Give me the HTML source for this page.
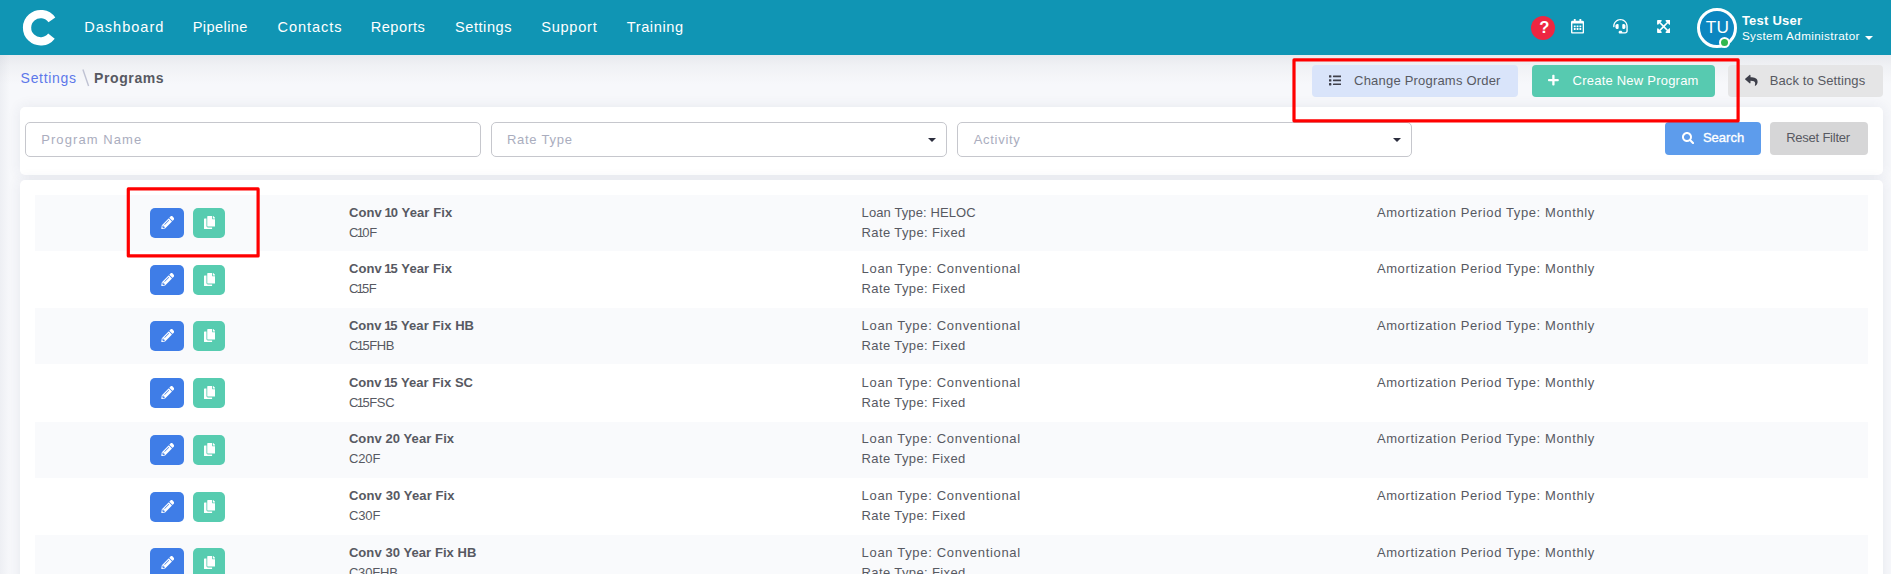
<!DOCTYPE html>
<html><head><meta charset="utf-8">
<style>
*{box-sizing:border-box;margin:0;padding:0}
html,body{width:1891px;height:574px;overflow:hidden}
body{font-family:"Liberation Sans",sans-serif;background:#f7f8fb;position:relative}
.abs{position:absolute}
.t{position:absolute;white-space:nowrap;line-height:20px}
.card{position:absolute;background:#fff;border-radius:5px;box-shadow:0 0 14px rgba(50,60,90,.085)}
.inp{position:absolute;top:122px;height:35px;border:1px solid #c6c7cd;border-radius:5px;background:#fff}
.caret{position:absolute;width:0;height:0;border-left:4px solid transparent;border-right:4px solid transparent;border-top:4.5px solid #2c2e3e}
.btn{position:absolute;border-radius:4px}
.red{position:absolute;border:3px solid #fb0007;border-radius:2px}
</style></head><body>
<div class="abs" style="left:0;top:55px;width:1891px;height:30px;background:linear-gradient(to bottom,rgba(40,50,70,.075) 0%,rgba(40,50,70,.035) 35%,rgba(40,50,70,.01) 75%,rgba(40,50,70,0) 100%)"></div>
<div class="abs" style="left:0;top:55px;width:10px;height:519px;background:linear-gradient(to right,rgba(110,120,145,.07),rgba(110,120,145,0))"></div>
<div class="abs" style="left:0;top:0;width:1891px;height:55px;background:#1095b4"></div>
<svg class="abs" style="left:0;top:0" width="80" height="55" viewBox="0 0 80 55"><path d="M51.88 19.87 A13.65 13.65 0 1 0 51.46 36.10" fill="none" stroke="#fff" stroke-width="8.3"/></svg>
<div class="abs" style="left:1531px;top:16px;width:24px;height:24px;border-radius:50%;background:#ee2641"></div>
<div class="abs" style="left:1697px;top:8px;width:40px;height:40px;border-radius:50%;background:#0b86c0;border:3px solid #fff"></div>
<div class="abs" style="left:1719.3px;top:37.1px;width:11px;height:11px;border-radius:50%;background:#2fb84e;border:2px solid #fff"></div>
<div class="caret" style="left:1865px;top:35.5px;border-top-color:#fff;border-top-width:4px"></div>

<svg class="abs" style="left:80px;top:66px" width="12" height="24" viewBox="0 0 12 24"><path d="M2.9 3.6 L8.6 20" stroke="#bfc2d3" stroke-width="1.4" fill="none"/></svg>

<div class="btn" style="left:1312px;top:65px;width:206px;height:32px;background:#d9e4fa"></div>
<div class="btn" style="left:1532px;top:65px;width:183px;height:32px;background:#57cab0"></div>
<div class="btn" style="left:1728px;top:65px;width:155px;height:32px;background:#e5e5e6"></div>

<div class="card" style="left:20px;top:107px;width:1863px;height:68px"></div>
<div class="inp" style="left:25px;width:456px"></div>
<div class="inp" style="left:491px;width:456px"></div>
<div class="inp" style="left:957px;width:455px"></div>
<div class="caret" style="left:927.8px;top:138px"></div>
<div class="caret" style="left:1393.2px;top:138px"></div>
<div class="btn" style="left:1665px;top:122px;width:96px;height:33px;background:#5d9cec"></div>
<div class="btn" style="left:1770px;top:122px;width:98px;height:33px;background:#d6d6d7"></div>

<div class="card" style="left:20px;top:180px;width:1863px;height:420px"></div>
<div class="abs" style="left:35px;top:195px;width:1833px;height:55.8px;background:#f9fafc"></div>
<div class="abs" style="left:150px;top:208px;width:34px;height:30px;border-radius:5px;background:#3f7de7"></div>
<div class="abs" style="left:193px;top:208px;width:32px;height:30px;border-radius:5px;background:#57ccb0"></div>
<svg class="abs" style="left:160.6px;top:215.6px" width="13.6" height="13" viewBox="0 0 512 512" ><path fill="#fff" d="M497.9 142.1l-46.1 46.1c-4.7 4.7-12.3 4.7-17 0l-111-111c-4.7-4.7-4.7-12.3 0-17l46.1-46.1c18.7-18.7 49.1-18.7 67.9 0l60.1 60.1c18.8 18.700 18.800 49.100 0 67.900zM284.200 99.800L21.600 362.400.4 483.900c-2.900 16.400 11.400 30.600 27.800 27.800l121.500-21.300 262.600-262.600c4.700-4.700 4.700-12.300 0-17l-111-111c-4.800-4.700-12.400-4.700-17.100 0zM124.100 339.900c-5.500-5.500-5.500-14.300 0-19.800l154-154c5.500-5.500 14.300-5.500 19.800 0s5.500 14.300 0 19.800l-154 154c-5.500 5.500-14.300 5.500-19.800 0zM88 424h48v36.300l-64.500 11.300-31.100-31.100L51.700 376H88v48z"/></svg>
<svg class="abs" style="left:203.6px;top:215.6px" width="11.4" height="13" viewBox="0 0 448 512" ><path fill="#fff" d="M320 448v40c0 13.255-10.745 24-24 24H24c-13.255 0-24-10.745-24-24V120c0-13.255 10.745-24 24-24h72v296c0 30.879 25.121 56 56 56h168zm0-344V0H152c-13.255 0-24 10.745-24 24v368c0 13.255 10.745 24 24 24h272c13.255 0 24-10.745 24-24V128H344c-13.200 0-24-10.800-24-24zm120.971-31.029L375.029 7.029A24 24 0 0 0 358.059 0H352v96h96v-6.059a24 24 0 0 0-7.029-16.970z"/></svg>
<div class="abs" style="left:150px;top:265px;width:34px;height:30px;border-radius:5px;background:#3f7de7"></div>
<div class="abs" style="left:193px;top:265px;width:32px;height:30px;border-radius:5px;background:#57ccb0"></div>
<svg class="abs" style="left:160.6px;top:272.6px" width="13.6" height="13" viewBox="0 0 512 512" ><path fill="#fff" d="M497.9 142.1l-46.1 46.1c-4.7 4.7-12.3 4.7-17 0l-111-111c-4.7-4.7-4.7-12.3 0-17l46.1-46.1c18.7-18.7 49.1-18.7 67.9 0l60.1 60.1c18.8 18.700 18.800 49.100 0 67.900zM284.200 99.800L21.600 362.400.4 483.900c-2.900 16.400 11.400 30.600 27.800 27.800l121.500-21.300 262.600-262.600c4.700-4.700 4.700-12.300 0-17l-111-111c-4.800-4.700-12.400-4.700-17.100 0zM124.100 339.900c-5.500-5.500-5.500-14.300 0-19.800l154-154c5.500-5.500 14.300-5.500 19.800 0s5.500 14.300 0 19.800l-154 154c-5.500 5.500-14.300 5.500-19.800 0zM88 424h48v36.300l-64.500 11.300-31.100-31.100L51.700 376H88v48z"/></svg>
<svg class="abs" style="left:203.6px;top:272.6px" width="11.4" height="13" viewBox="0 0 448 512" ><path fill="#fff" d="M320 448v40c0 13.255-10.745 24-24 24H24c-13.255 0-24-10.745-24-24V120c0-13.255 10.745-24 24-24h72v296c0 30.879 25.121 56 56 56h168zm0-344V0H152c-13.255 0-24 10.745-24 24v368c0 13.255 10.745 24 24 24h272c13.255 0 24-10.745 24-24V128H344c-13.200 0-24-10.800-24-24zm120.971-31.029L375.029 7.029A24 24 0 0 0 358.059 0H352v96h96v-6.059a24 24 0 0 0-7.029-16.970z"/></svg>
<div class="abs" style="left:35px;top:308px;width:1833px;height:56.4px;background:#f9fafc"></div>
<div class="abs" style="left:150px;top:321px;width:34px;height:30px;border-radius:5px;background:#3f7de7"></div>
<div class="abs" style="left:193px;top:321px;width:32px;height:30px;border-radius:5px;background:#57ccb0"></div>
<svg class="abs" style="left:160.6px;top:328.6px" width="13.6" height="13" viewBox="0 0 512 512" ><path fill="#fff" d="M497.9 142.1l-46.1 46.1c-4.7 4.7-12.3 4.7-17 0l-111-111c-4.7-4.7-4.7-12.3 0-17l46.1-46.1c18.7-18.7 49.1-18.7 67.9 0l60.1 60.1c18.8 18.700 18.800 49.100 0 67.900zM284.200 99.800L21.600 362.400.4 483.900c-2.900 16.400 11.400 30.600 27.800 27.800l121.500-21.300 262.600-262.600c4.700-4.700 4.700-12.300 0-17l-111-111c-4.800-4.700-12.400-4.700-17.100 0zM124.100 339.900c-5.500-5.500-5.500-14.300 0-19.800l154-154c5.500-5.500 14.300-5.500 19.800 0s5.500 14.300 0 19.800l-154 154c-5.500 5.500-14.300 5.500-19.800 0zM88 424h48v36.300l-64.500 11.300-31.100-31.100L51.700 376H88v48z"/></svg>
<svg class="abs" style="left:203.6px;top:328.6px" width="11.4" height="13" viewBox="0 0 448 512" ><path fill="#fff" d="M320 448v40c0 13.255-10.745 24-24 24H24c-13.255 0-24-10.745-24-24V120c0-13.255 10.745-24 24-24h72v296c0 30.879 25.121 56 56 56h168zm0-344V0H152c-13.255 0-24 10.745-24 24v368c0 13.255 10.745 24 24 24h272c13.255 0 24-10.745 24-24V128H344c-13.200 0-24-10.800-24-24zm120.971-31.029L375.029 7.029A24 24 0 0 0 358.059 0H352v96h96v-6.059a24 24 0 0 0-7.029-16.970z"/></svg>
<div class="abs" style="left:150px;top:378px;width:34px;height:30px;border-radius:5px;background:#3f7de7"></div>
<div class="abs" style="left:193px;top:378px;width:32px;height:30px;border-radius:5px;background:#57ccb0"></div>
<svg class="abs" style="left:160.6px;top:385.6px" width="13.6" height="13" viewBox="0 0 512 512" ><path fill="#fff" d="M497.9 142.1l-46.1 46.1c-4.7 4.7-12.3 4.7-17 0l-111-111c-4.7-4.7-4.7-12.3 0-17l46.1-46.1c18.7-18.7 49.1-18.7 67.9 0l60.1 60.1c18.8 18.700 18.800 49.100 0 67.900zM284.200 99.800L21.600 362.400.4 483.900c-2.900 16.400 11.400 30.600 27.800 27.800l121.500-21.300 262.600-262.600c4.700-4.700 4.700-12.300 0-17l-111-111c-4.800-4.700-12.400-4.700-17.100 0zM124.100 339.900c-5.500-5.500-5.500-14.300 0-19.800l154-154c5.500-5.500 14.300-5.500 19.800 0s5.500 14.300 0 19.800l-154 154c-5.500 5.500-14.300 5.500-19.800 0zM88 424h48v36.300l-64.500 11.300-31.100-31.100L51.700 376H88v48z"/></svg>
<svg class="abs" style="left:203.6px;top:385.6px" width="11.4" height="13" viewBox="0 0 448 512" ><path fill="#fff" d="M320 448v40c0 13.255-10.745 24-24 24H24c-13.255 0-24-10.745-24-24V120c0-13.255 10.745-24 24-24h72v296c0 30.879 25.121 56 56 56h168zm0-344V0H152c-13.255 0-24 10.745-24 24v368c0 13.255 10.745 24 24 24h272c13.255 0 24-10.745 24-24V128H344c-13.200 0-24-10.800-24-24zm120.971-31.029L375.029 7.029A24 24 0 0 0 358.059 0H352v96h96v-6.059a24 24 0 0 0-7.029-16.970z"/></svg>
<div class="abs" style="left:35px;top:422px;width:1833px;height:55.8px;background:#f9fafc"></div>
<div class="abs" style="left:150px;top:435px;width:34px;height:30px;border-radius:5px;background:#3f7de7"></div>
<div class="abs" style="left:193px;top:435px;width:32px;height:30px;border-radius:5px;background:#57ccb0"></div>
<svg class="abs" style="left:160.6px;top:442.6px" width="13.6" height="13" viewBox="0 0 512 512" ><path fill="#fff" d="M497.9 142.1l-46.1 46.1c-4.7 4.7-12.3 4.7-17 0l-111-111c-4.7-4.7-4.7-12.3 0-17l46.1-46.1c18.7-18.7 49.1-18.7 67.9 0l60.1 60.1c18.8 18.700 18.800 49.100 0 67.900zM284.200 99.800L21.600 362.400.4 483.900c-2.900 16.400 11.400 30.600 27.800 27.800l121.500-21.300 262.600-262.600c4.700-4.700 4.700-12.300 0-17l-111-111c-4.800-4.700-12.400-4.700-17.100 0zM124.100 339.900c-5.500-5.500-5.500-14.300 0-19.800l154-154c5.500-5.500 14.300-5.500 19.800 0s5.500 14.300 0 19.800l-154 154c-5.500 5.500-14.300 5.500-19.800 0zM88 424h48v36.300l-64.500 11.300-31.100-31.100L51.700 376H88v48z"/></svg>
<svg class="abs" style="left:203.6px;top:442.6px" width="11.4" height="13" viewBox="0 0 448 512" ><path fill="#fff" d="M320 448v40c0 13.255-10.745 24-24 24H24c-13.255 0-24-10.745-24-24V120c0-13.255 10.745-24 24-24h72v296c0 30.879 25.121 56 56 56h168zm0-344V0H152c-13.255 0-24 10.745-24 24v368c0 13.255 10.745 24 24 24h272c13.255 0 24-10.745 24-24V128H344c-13.200 0-24-10.800-24-24zm120.971-31.029L375.029 7.029A24 24 0 0 0 358.059 0H352v96h96v-6.059a24 24 0 0 0-7.029-16.970z"/></svg>
<div class="abs" style="left:150px;top:492px;width:34px;height:30px;border-radius:5px;background:#3f7de7"></div>
<div class="abs" style="left:193px;top:492px;width:32px;height:30px;border-radius:5px;background:#57ccb0"></div>
<svg class="abs" style="left:160.6px;top:499.6px" width="13.6" height="13" viewBox="0 0 512 512" ><path fill="#fff" d="M497.9 142.1l-46.1 46.1c-4.7 4.7-12.3 4.7-17 0l-111-111c-4.7-4.7-4.7-12.3 0-17l46.1-46.1c18.7-18.7 49.1-18.7 67.9 0l60.1 60.1c18.8 18.700 18.800 49.100 0 67.900zM284.200 99.800L21.600 362.400.4 483.900c-2.900 16.400 11.400 30.600 27.800 27.800l121.500-21.300 262.600-262.600c4.700-4.700 4.700-12.300 0-17l-111-111c-4.800-4.700-12.400-4.700-17.100 0zM124.100 339.900c-5.500-5.500-5.500-14.300 0-19.800l154-154c5.500-5.500 14.300-5.500 19.800 0s5.500 14.300 0 19.800l-154 154c-5.500 5.500-14.300 5.500-19.800 0zM88 424h48v36.300l-64.500 11.300-31.100-31.100L51.700 376H88v48z"/></svg>
<svg class="abs" style="left:203.6px;top:499.6px" width="11.4" height="13" viewBox="0 0 448 512" ><path fill="#fff" d="M320 448v40c0 13.255-10.745 24-24 24H24c-13.255 0-24-10.745-24-24V120c0-13.255 10.745-24 24-24h72v296c0 30.879 25.121 56 56 56h168zm0-344V0H152c-13.255 0-24 10.745-24 24v368c0 13.255 10.745 24 24 24h272c13.255 0 24-10.745 24-24V128H344c-13.200 0-24-10.800-24-24zm120.971-31.029L375.029 7.029A24 24 0 0 0 358.059 0H352v96h96v-6.059a24 24 0 0 0-7.029-16.970z"/></svg>
<div class="abs" style="left:35px;top:535px;width:1833px;height:56px;background:#f9fafc"></div>
<div class="abs" style="left:150px;top:548px;width:34px;height:30px;border-radius:5px;background:#3f7de7"></div>
<div class="abs" style="left:193px;top:548px;width:32px;height:30px;border-radius:5px;background:#57ccb0"></div>
<svg class="abs" style="left:160.6px;top:555.6px" width="13.6" height="13" viewBox="0 0 512 512" ><path fill="#fff" d="M497.9 142.1l-46.1 46.1c-4.7 4.7-12.3 4.7-17 0l-111-111c-4.7-4.7-4.7-12.3 0-17l46.1-46.1c18.7-18.7 49.1-18.7 67.9 0l60.1 60.1c18.8 18.700 18.800 49.100 0 67.900zM284.200 99.800L21.600 362.400.4 483.900c-2.900 16.400 11.400 30.600 27.800 27.800l121.500-21.300 262.600-262.600c4.700-4.700 4.700-12.300 0-17l-111-111c-4.800-4.700-12.400-4.700-17.100 0zM124.100 339.900c-5.500-5.500-5.500-14.300 0-19.800l154-154c5.500-5.500 14.300-5.500 19.800 0s5.500 14.300 0 19.800l-154 154c-5.500 5.500-14.300 5.500-19.800 0zM88 424h48v36.300l-64.500 11.300-31.100-31.100L51.700 376H88v48z"/></svg>
<svg class="abs" style="left:203.6px;top:555.6px" width="11.4" height="13" viewBox="0 0 448 512" ><path fill="#fff" d="M320 448v40c0 13.255-10.745 24-24 24H24c-13.255 0-24-10.745-24-24V120c0-13.255 10.745-24 24-24h72v296c0 30.879 25.121 56 56 56h168zm0-344V0H152c-13.255 0-24 10.745-24 24v368c0 13.255 10.745 24 24 24h272c13.255 0 24-10.745 24-24V128H344c-13.200 0-24-10.800-24-24zm120.971-31.029L375.029 7.029A24 24 0 0 0 358.059 0H352v96h96v-6.059a24 24 0 0 0-7.029-16.970z"/></svg>
<svg class="abs" style="left:1570.9px;top:19.3px" width="13.1" height="14.6" viewBox="0 0 448 512" preserveAspectRatio="none"><path fill="#fff" d="M148 288h-40c-6.600 0-12-5.400-12-12v-40c0-6.600 5.400-12 12-12h40c6.600 0 12 5.400 12 12v40c0 6.600-5.400 12-12 12zm108-12v-40c0-6.600-5.400-12-12-12h-40c-6.600 0-12 5.400-12 12v40c0 6.600 5.400 12 12 12h40c6.600 0 12-5.400 12-12zm96 0v-40c0-6.600-5.400-12-12-12h-40c-6.600 0-12 5.400-12 12v40c0 6.600 5.400 12 12 12h40c6.600 0 12-5.400 12-12zm-96 96v-40c0-6.600-5.400-12-12-12h-40c-6.600 0-12 5.400-12 12v40c0 6.600 5.400 12 12 12h40c6.600 0 12-5.400 12-12zm-96 0v-40c0-6.600-5.400-12-12-12h-40c-6.600 0-12 5.400-12 12v40c0 6.600 5.400 12 12 12h40c6.600 0 12-5.400 12-12zm192 0v-40c0-6.600-5.400-12-12-12h-40c-6.600 0-12 5.400-12 12v40c0 6.600 5.400 12 12 12h40c6.600 0 12-5.400 12-12zm96-260v352c0 26.500-21.500 48-48 48H48c-26.500 0-48-21.500-48-48V112c0-26.500 21.500-48 48-48h48V12c0-6.600 5.400-12 12-12h40c6.600 0 12 5.400 12 12v52h128V12c0-6.600 5.400-12 12-12h40c6.600 0 12 5.400 12 12v52h48c26.500 0 48 21.500 48 48zm-48 346V160H48v298c0 3.300 2.700 6 6 6h340c3.300 0 6-2.700 6-6z"/></svg>
<svg class="abs" style="left:1613.1px;top:19.3px" width="14.9" height="14.6" viewBox="0 0 512 512" ><path fill="#fff" d="M192 208c0-17.670-14.330-32-32-32h-16c-35.350 0-64 28.650-64 64v48c0 35.350 28.650 64 64 64h16c17.670 0 32-14.330 32-32V208zm176 144c35.350 0 64-28.650 64-64v-48c0-35.350-28.650-64-64-64h-16c-17.670 0-32 14.330-32 32v112c0 17.670 14.330 32 32 32h16zM256 0C113.180 0 4.580 118.830 0 256v16c0 8.840 7.160 16 16 16h16c8.840 0 16-7.160 16-16v-16c0-114.690 93.310-208 208-208s208 93.310 208 208h-.12c.08 2.430.12 165.720.12 165.720 0 23.350-18.930 42.280-42.280 42.280H320c0-26.510-21.490-48-48-48h-32c-26.510 0-48 21.490-48 48s21.490 48 48 48h181.720c49.860 0 90.280-40.420 90.280-90.280V256C507.420 118.830 398.820 0 256 0z"/></svg>
<svg class="abs" style="left:1656.9px;top:19.3px" width="13.3" height="15" viewBox="0 0 448 512" ><path fill="#fff" d="M448 344v112a23.940 23.940 0 0 1-24 24H312c-21.390 0-32.090-25.900-17-41l36.200-36.200L224 295.600 116.770 402.900 153 439c15.090 15.100 4.390 41-17 41H24a23.940 23.940 0 0 1-24-24V344c0-21.400 25.890-32.100 41-17l36.190 36.200L184.460 256 77.180 148.700 41 185c-15.100 15.100-41 4.400-41-17V56a23.940 23.940 0 0 1 24-24h112c21.390 0 32.090 25.900 17 41l-36.200 36.200L224 216.400l107.230-107.300L295 73c-15.090-15.100-4.390-41 17-41h112a23.940 23.940 0 0 1 24 24v112c0 21.400-25.890 32.100-41 17l-36.190-36.200L263.540 256l107.280 107.300L407 327.100c15.100-15.200 41-4.500 41 16.900z"/></svg>
<svg class="abs" style="left:1328.5px;top:74.0px" width="12.7" height="12.7" viewBox="0 0 512 512" ><path fill="#3e3f4a" d="M80 368H16a16 16 0 0 0-16 16v64a16 16 0 0 0 16 16h64a16 16 0 0 0 16-16v-64a16 16 0 0 0-16-16zm0-320H16A16 16 0 0 0 0 64v64a16 16 0 0 0 16 16h64a16 16 0 0 0 16-16V64a16 16 0 0 0-16-16zm0 160H16a16 16 0 0 0-16 16v64a16 16 0 0 0 16 16h64a16 16 0 0 0 16-16v-64a16 16 0 0 0-16-16zm416 176H176a16 16 0 0 0-16 16v32a16 16 0 0 0 16 16h320a16 16 0 0 0 16-16v-32a16 16 0 0 0-16-16zm0-320H176a16 16 0 0 0-16 16v32a16 16 0 0 0 16 16h320a16 16 0 0 0 16-16V80a16 16 0 0 0-16-16zm0 160H176a16 16 0 0 0-16 16v32a16 16 0 0 0 16 16h320a16 16 0 0 0 16-16v-32a16 16 0 0 0-16-16z"/></svg>
<svg class="abs" style="left:1548.4px;top:74.4px" width="10.8" height="12.4" viewBox="0 0 448 512" ><path fill="#fff" d="M416 208H272V64c0-17.67-14.33-32-32-32h-32c-17.67 0-32 14.33-32 32v144H32c-17.67 0-32 14.33-32 32v32c0 17.67 14.33 32 32 32h144v144c0 17.67 14.33 32 32 32h32c17.67 0 32-14.33 32-32V304h144c17.67 0 32-14.33 32-32v-32c0-17.67-14.33-32-32-32z"/></svg>
<svg class="abs" style="left:1745.2px;top:74.4px" width="12.6" height="12.6" viewBox="0 0 512 512" ><path fill="#3e3f4a" d="M8.309 189.836L184.313 37.851C199.719 24.546 224 35.347 224 56.015v80.053c160.629 1.839 288 34.032 288 186.258 0 61.441-39.581 122.309-83.333 154.132-13.653 9.931-33.111-2.533-28.077-18.631 45.344-145.012-21.507-183.510-176.590-185.742V360c0 20.700-24.300 31.453-39.687 18.164l-176.004-152c-11.071-9.562-11.086-26.753 0-36.328z"/></svg>
<svg class="abs" style="left:1681.9px;top:131.9px" width="12.3" height="12.3" viewBox="0 0 512 512" ><path fill="#fff" d="M505 442.7L405.3 343c-4.5-4.5-10.6-7-17-7H372c27.6-35.3 44-79.7 44-128C416 93.1 322.9 0 208 0S0 93.1 0 208s93.1 208 208 208c48.3 0 92.700-16.400 128-44v16.300c0 6.400 2.500 12.500 7 17l99.700 99.700c9.400 9.400 24.600 9.400 33.900 0l28.300-28.300c9.400-9.400 9.400-24.600.1-34zM208 336c-70.700 0-128-57.200-128-128 0-70.700 57.200-128 128-128 70.700 0 128 57.200 128 128 0 70.700-57.200 128-128 128z"/></svg>
<div class="t" style="left:84.30px;top:16.84px;font-size:14.6px;color:#fff;letter-spacing:0.953px">Dashboard</div>
<div class="t" style="left:192.70px;top:16.84px;font-size:14.6px;color:#fff;letter-spacing:0.399px">Pipeline</div>
<div class="t" style="left:277.60px;top:16.84px;font-size:14.6px;color:#fff;letter-spacing:0.915px">Contacts</div>
<div class="t" style="left:370.70px;top:16.84px;font-size:14.6px;color:#fff;letter-spacing:0.516px">Reports</div>
<div class="t" style="left:455.00px;top:16.84px;font-size:14.6px;color:#fff;letter-spacing:0.538px">Settings</div>
<div class="t" style="left:541.20px;top:16.84px;font-size:14.6px;color:#fff;letter-spacing:0.740px">Support</div>
<div class="t" style="left:626.70px;top:16.84px;font-size:14.6px;color:#fff;letter-spacing:0.605px">Training</div>
<div class="t" style="left:1741.90px;top:10.70px;font-size:13px;color:#fff;letter-spacing:0.222px;font-weight:bold">Test User</div>
<div class="t" style="left:1741.90px;top:25.85px;font-size:11.7px;color:#fff;letter-spacing:0.375px">System Administrator</div>
<div class="t" style="left:1705.70px;top:17.14px;font-size:17.2px;color:#fff;letter-spacing:0.301px">TU</div>
<div class="t" style="left:1539.30px;top:18.45px;font-size:16.6px;color:#fff;letter-spacing:0.000px;font-weight:bold">?</div>
<div class="t" style="left:20.60px;top:68.15px;font-size:14px;color:#5d78ea;letter-spacing:0.702px">Settings</div>
<div class="t" style="left:94.10px;top:68.15px;font-size:14px;color:#575962;letter-spacing:0.590px;font-weight:bold">Programs</div>
<div class="t" style="left:1354.10px;top:71.00px;font-size:13px;color:#575962;letter-spacing:0.199px">Change Programs Order</div>
<div class="t" style="left:1572.60px;top:71.00px;font-size:13px;color:#fff;letter-spacing:0.220px">Create New Program</div>
<div class="t" style="left:1769.70px;top:71.00px;font-size:13px;color:#575962;letter-spacing:0.104px">Back to Settings</div>
<div class="t" style="left:1702.90px;top:127.90px;font-size:13px;color:#fff;letter-spacing:0.008px;-webkit-text-stroke:0.35px #fff">Search</div>
<div class="t" style="left:1786.20px;top:127.90px;font-size:13px;color:#575962;letter-spacing:-0.230px">Reset Filter</div>
<div class="t" style="left:41.20px;top:129.70px;font-size:13px;color:#aaadbe;letter-spacing:1.081px">Program Name</div>
<div class="t" style="left:506.90px;top:129.70px;font-size:13px;color:#aaadbe;letter-spacing:0.747px">Rate Type</div>
<div class="t" style="left:973.70px;top:129.70px;font-size:13px;color:#aaadbe;letter-spacing:0.704px">Activity</div>
<div class="t" style="left:348.90px;top:202.80px;font-size:13px;color:#575962;letter-spacing:0.132px;font-weight:bold">Conv <span style="margin:0 -1.2px">1</span>0 Year Fix</div>
<div class="t" style="left:348.90px;top:222.80px;font-size:13px;color:#575962;letter-spacing:-0.416px">C<span style="margin:0 -1.2px">1</span>0F</div>
<div class="t" style="left:861.60px;top:202.80px;font-size:13px;color:#575962;letter-spacing:0.104px">Loan Type: HELOC</div>
<div class="t" style="left:861.60px;top:222.80px;font-size:13px;color:#575962;letter-spacing:0.377px">Rate Type: Fixed</div>
<div class="t" style="left:1376.90px;top:202.80px;font-size:13px;color:#575962;letter-spacing:0.613px">Amortization Period Type: Monthly</div>
<div class="t" style="left:348.90px;top:259.47px;font-size:13px;color:#575962;letter-spacing:0.105px;font-weight:bold">Conv <span style="margin:0 -1.2px">1</span>5 Year Fix</div>
<div class="t" style="left:348.90px;top:279.47px;font-size:13px;color:#575962;letter-spacing:-0.516px">C<span style="margin:0 -1.2px">1</span>5F</div>
<div class="t" style="left:861.60px;top:259.47px;font-size:13px;color:#575962;letter-spacing:0.680px">Loan Type: Conventional</div>
<div class="t" style="left:861.60px;top:279.47px;font-size:13px;color:#575962;letter-spacing:0.377px">Rate Type: Fixed</div>
<div class="t" style="left:1376.90px;top:259.47px;font-size:13px;color:#575962;letter-spacing:0.613px">Amortization Period Type: Monthly</div>
<div class="t" style="left:348.90px;top:316.14px;font-size:13px;color:#575962;letter-spacing:0.069px;font-weight:bold">Conv <span style="margin:0 -1.2px">1</span>5 Year Fix HB</div>
<div class="t" style="left:348.90px;top:336.14px;font-size:13px;color:#575962;letter-spacing:-0.375px">C<span style="margin:0 -1.2px">1</span>5FHB</div>
<div class="t" style="left:861.60px;top:316.14px;font-size:13px;color:#575962;letter-spacing:0.680px">Loan Type: Conventional</div>
<div class="t" style="left:861.60px;top:336.14px;font-size:13px;color:#575962;letter-spacing:0.377px">Rate Type: Fixed</div>
<div class="t" style="left:1376.90px;top:316.14px;font-size:13px;color:#575962;letter-spacing:0.613px">Amortization Period Type: Monthly</div>
<div class="t" style="left:348.90px;top:372.81px;font-size:13px;color:#575962;letter-spacing:0.054px;font-weight:bold">Conv <span style="margin:0 -1.2px">1</span>5 Year Fix SC</div>
<div class="t" style="left:348.90px;top:392.81px;font-size:13px;color:#575962;letter-spacing:-0.372px">C<span style="margin:0 -1.2px">1</span>5FSC</div>
<div class="t" style="left:861.60px;top:372.81px;font-size:13px;color:#575962;letter-spacing:0.680px">Loan Type: Conventional</div>
<div class="t" style="left:861.60px;top:392.81px;font-size:13px;color:#575962;letter-spacing:0.377px">Rate Type: Fixed</div>
<div class="t" style="left:1376.90px;top:372.81px;font-size:13px;color:#575962;letter-spacing:0.613px">Amortization Period Type: Monthly</div>
<div class="t" style="left:348.90px;top:429.48px;font-size:13px;color:#575962;letter-spacing:0.092px;font-weight:bold">Conv 20 Year Fix</div>
<div class="t" style="left:348.90px;top:449.48px;font-size:13px;color:#575962;letter-spacing:-0.083px">C20F</div>
<div class="t" style="left:861.60px;top:429.48px;font-size:13px;color:#575962;letter-spacing:0.680px">Loan Type: Conventional</div>
<div class="t" style="left:861.60px;top:449.48px;font-size:13px;color:#575962;letter-spacing:0.377px">Rate Type: Fixed</div>
<div class="t" style="left:1376.90px;top:429.48px;font-size:13px;color:#575962;letter-spacing:0.613px">Amortization Period Type: Monthly</div>
<div class="t" style="left:348.90px;top:486.15px;font-size:13px;color:#575962;letter-spacing:0.125px;font-weight:bold">Conv 30 Year Fix</div>
<div class="t" style="left:348.90px;top:506.15px;font-size:13px;color:#575962;letter-spacing:-0.083px">C30F</div>
<div class="t" style="left:861.60px;top:486.15px;font-size:13px;color:#575962;letter-spacing:0.680px">Loan Type: Conventional</div>
<div class="t" style="left:861.60px;top:506.15px;font-size:13px;color:#575962;letter-spacing:0.377px">Rate Type: Fixed</div>
<div class="t" style="left:1376.90px;top:486.15px;font-size:13px;color:#575962;letter-spacing:0.613px">Amortization Period Type: Monthly</div>
<div class="t" style="left:348.90px;top:542.82px;font-size:13px;color:#575962;letter-spacing:0.075px;font-weight:bold">Conv 30 Year Fix HB</div>
<div class="t" style="left:348.90px;top:562.82px;font-size:13px;color:#575962;letter-spacing:-0.155px">C30FHB</div>
<div class="t" style="left:861.60px;top:542.82px;font-size:13px;color:#575962;letter-spacing:0.680px">Loan Type: Conventional</div>
<div class="t" style="left:861.60px;top:562.82px;font-size:13px;color:#575962;letter-spacing:0.377px">Rate Type: Fixed</div>
<div class="t" style="left:1376.90px;top:542.82px;font-size:13px;color:#575962;letter-spacing:0.613px">Amortization Period Type: Monthly</div>
<svg class="abs" style="left:0;top:0" width="1891" height="300" viewBox="0 0 1891 300"><g fill="none" stroke="#ff0000" stroke-width="3.2" stroke-linejoin="round"><rect x="1294" y="59.9" width="444.1" height="60.9"/><rect x="128.3" y="188.9" width="129.8" height="67"/></g></svg>
</body></html>
